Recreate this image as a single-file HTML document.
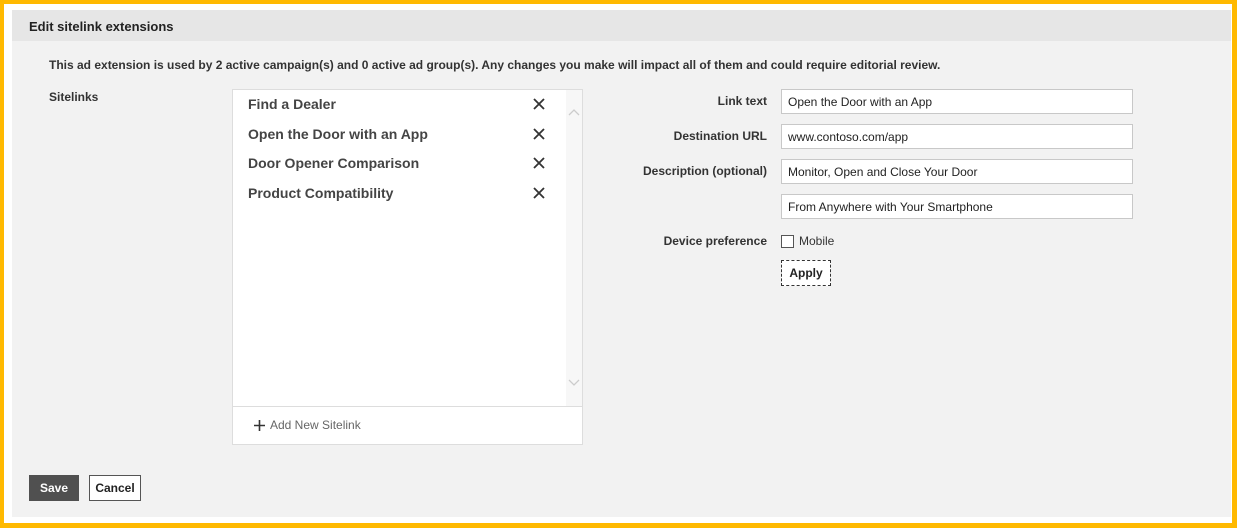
<!DOCTYPE html>
<html><head><style>
*{box-sizing:border-box;margin:0;padding:0}
body{width:1237px;height:528px;background:#fff;font-family:"Liberation Sans",Arial,sans-serif;position:relative;overflow:hidden;color:#222}
.frame{position:absolute;left:0;top:0;width:1237px;height:528px;border:4px solid #FFB900;border-bottom-width:5px;border-right-width:5px}
.panel{position:absolute;left:12px;top:10px;width:1219px;height:507px;background:#f2f2f2}
.hdr{position:absolute;left:12px;top:10px;width:1219px;height:31px;background:#e6e6e6;font-weight:bold;font-size:13px;padding:9px 0 0 17px;color:#222}
.a{position:absolute;white-space:nowrap}
.b{font-weight:bold;font-size:12px;color:#333}
.list{position:absolute;left:232px;top:89px;width:351px;height:356px;background:#fff;border:1px solid #ddd}
.sb{position:absolute;right:0;top:0;width:16px;height:316px;background:#f7f7f7}
.item{position:absolute;left:15px;font-size:14px;font-weight:bold;color:#444}
.x{position:absolute;left:300px;font-size:16px;color:#333}
.inp{position:absolute;left:781px;width:352px;height:25px;background:#fff;border:1px solid #c8c8c8;font-size:12px;padding:5px 6px;color:#222}
.lbl{position:absolute;right:470px;font-weight:bold;font-size:12px;color:#333}
</style></head><body>
<div class="frame"></div>
<div class="panel"></div>
<div class="hdr">Edit sitelink extensions</div>
<div class="a b" style="left:49px;top:58px">This ad extension is used by 2 active campaign(s) and 0 active ad group(s). Any changes you make will impact all of them and could require editorial review.</div>
<div class="a b" style="left:49px;top:90px">Sitelinks</div>
<div class="list">
 <div class="sb"><svg width="16" height="316" style="position:absolute;left:0;top:0"><path d="M3 25l5-5 5 5" stroke="#ccc" fill="none" stroke-width="1.3"/><path d="M3 290l5 5 5-5" stroke="#ccc" fill="none" stroke-width="1.3"/></svg></div>
 <div class="item" style="top:6px">Find a Dealer</div><svg class="x" style="top:8px" width="12" height="12"><path d="M1 1L11 11M11 1L1 11" stroke="#333" stroke-width="1.8"/></svg>
 <div class="item" style="top:36px">Open the Door with an App</div><svg class="x" style="top:38px" width="12" height="12"><path d="M1 1L11 11M11 1L1 11" stroke="#333" stroke-width="1.8"/></svg>
 <div class="item" style="top:65px">Door Opener Comparison</div><svg class="x" style="top:67px" width="12" height="12"><path d="M1 1L11 11M11 1L1 11" stroke="#333" stroke-width="1.8"/></svg>
 <div class="item" style="top:95px">Product Compatibility</div><svg class="x" style="top:97px" width="12" height="12"><path d="M1 1L11 11M11 1L1 11" stroke="#333" stroke-width="1.8"/></svg>
 <div style="position:absolute;left:0;top:316px;width:349px;height:1px;background:#ddd"></div>
 <svg style="position:absolute;left:21px;top:330px" width="11" height="11"><path d="M5.5 0V11M0 5.5H11" stroke="#333" stroke-width="1.6"/></svg>
 <div class="a" style="left:37px;top:328px;font-size:12px;color:#666">Add New Sitelink</div>
</div>
<div class="lbl" style="top:94px">Link text</div>
<div class="lbl" style="top:129px">Destination URL</div>
<div class="lbl" style="top:164px">Description (optional)</div>
<div class="lbl" style="top:234px">Device preference</div>
<div class="inp" style="top:89px">Open the Door with an App</div>
<div class="inp" style="top:124px">www.contoso.com/app</div>
<div class="inp" style="top:159px">Monitor, Open and Close Your Door</div>
<div class="inp" style="top:194px">From Anywhere with Your Smartphone</div>
<div class="a" style="left:781px;top:235px;width:13px;height:13px;border:1px solid #555;background:#fff"></div>
<div class="a" style="left:799px;top:234px;font-size:12px;color:#333">Mobile</div>
<div class="a" style="left:781px;top:260px;width:50px;height:26px;border:1px dashed #333;background:#fff;font-weight:bold;font-size:12px;text-align:center;line-height:24px">Apply</div>
<div class="a" style="left:29px;top:475px;width:50px;height:26px;background:#505050;color:#fff;font-weight:bold;font-size:12px;text-align:center;line-height:26px">Save</div>
<div class="a" style="left:89px;top:475px;width:52px;height:26px;border:1px solid #555;background:#fff;color:#222;font-weight:bold;font-size:12px;text-align:center;line-height:24px">Cancel</div>
</body></html>
